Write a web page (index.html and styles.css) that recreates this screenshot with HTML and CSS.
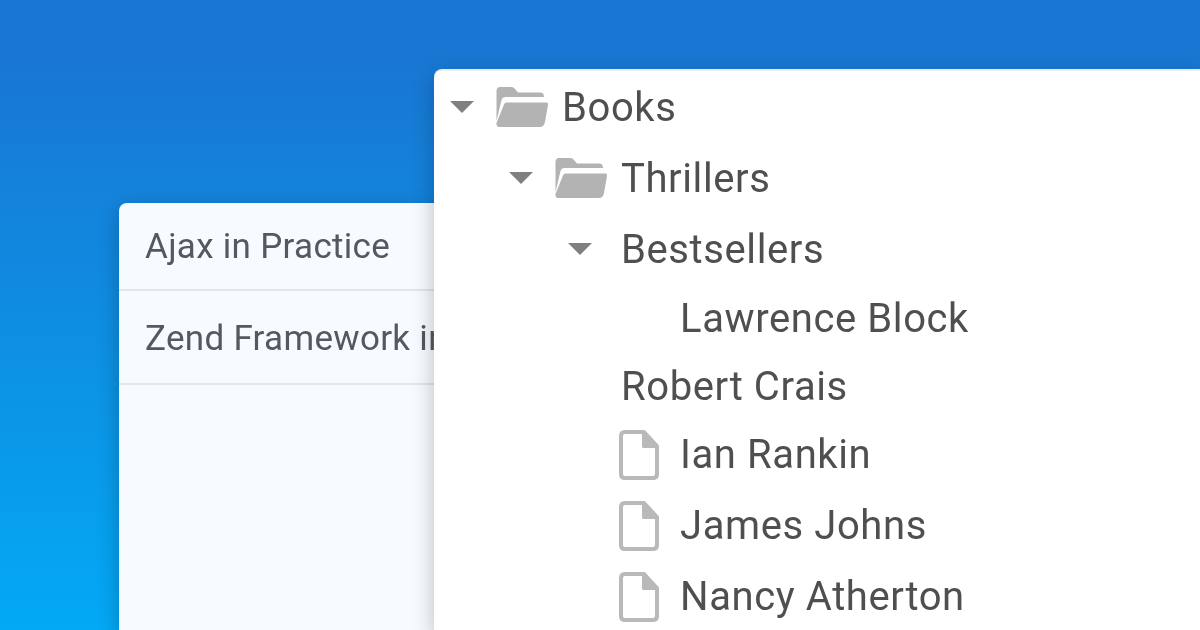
FILE: index.html
```html
<!DOCTYPE html>
<html lang="en">
<head>
<meta charset="UTF-8" />
<title>Tree view</title>
<link rel="stylesheet" href="styles.css">
</head>
<body>
<svg class="defs" width="0" height="0">
  <symbol id="folder" viewBox="0 0 52 40">
    <path fill="#b3b3b3" d="M4 0h11c2 0 3 .8 4 2l3 3.500h22c2.500 0 4 1.500 4 4V10H9.500c-2 0-3.400 1.200-4 3L.5 34V4C.5 1.500 2 0 4 0z"/>
    <path fill="#b3b3b3" d="M10.500 15.500H50c1.500 0 2.300 1 2 2.500L49 35c-.5 3-2.500 5-5 5H4c-2.500 0-4-1.500-3.500-4L8 17.500c.4-1.300 1.300-2 2.500-2z"/>
  </symbol>
  <symbol id="file" viewBox="0 0 40 50">
    <path fill="none" stroke="#b9b9b9" stroke-width="4" stroke-linejoin="round" d="M6 2h19l13 14v28c0 2.500-1.500 4-4 4H6c-2.500 0-4-1.500-4-4V6c0-2.500 1.500-4 4-4z"/>
    <path fill="#b9b9b9" d="M23 2h3l12 13v3H25c-1.500 0-2-.5-2-2z"/>
  </symbol>
</svg>

<div class="panel back">
  <div class="book">Ajax in Practice</div>
  <div class="book">Zend Framework in Action</div>
</div>

<div class="panel tree">
  <div class="row row-icon lv0"><span class="arrow"></span><svg class="folder"><use href="#folder"/></svg><span class="label">Books</span></div>
  <div class="row row-icon lv1"><span class="arrow"></span><svg class="folder"><use href="#folder"/></svg><span class="label">Thrillers</span></div>
  <div class="row row-icon lv2"><span class="arrow"></span><span class="label">Bestsellers</span></div>
  <div class="row lv3"><span>Lawrence Block</span></div>
  <div class="row row-last lv2"><span class="label">Robert Crais</span></div>
  <div class="row row-file lv3"><svg class="file"><use href="#file"/></svg><span>Ian Rankin</span></div>
  <div class="row row-file lv3"><svg class="file"><use href="#file"/></svg><span>James Johns</span></div>
  <div class="row row-file lv3"><svg class="file"><use href="#file"/></svg><span>Nancy Atherton</span></div>
</div>
</body>
</html>
```
FILE: styles.css
```css
html, body {
  margin: 0;
  height: 100%;
}
body {
  position: relative;
  overflow: hidden;
  font-family: "Roboto", "Liberation Sans", sans-serif;
  background: linear-gradient(to bottom, #1976d2 8%, #03a9f5 100%);
}
.defs { position: absolute; }

.panel {
  position: absolute;
  bottom: 0;
  right: 0;
  overflow: hidden;
  border-radius: 8px 0 0 0;
  box-shadow: 0 8px 22px rgba(0,0,0,0.25);
}

.back {
  left: 119px;
  top: 203px;
  background: #f6fbff;
}
.book {
  height: 86px;
  padding-left: 26px;
  line-height: 87px;
  font-size: 35px;
  letter-spacing: 0.3px;
  color: #54595f;
  white-space: nowrap;
  overflow: hidden;
  border-bottom: 2px solid #e2e6e9;
  filter: blur(0.4px);
}
.book + .book { height: 92px; line-height: 96px; }

.tree {
  left: 434px;
  top: 69px;
  background: #fff;
  font-size: 40px;
  letter-spacing: 0.6px;
  color: #4f4f4f;
  box-sizing: border-box;
  border-top: 2px solid #ececec;
}

.row {
  display: flex;
  align-items: center;
  height: 68px;
  white-space: nowrap;
  filter: blur(0.4px);
}
.row-icon, .row-file { height: 71px; }
.row-last { height: 67px; }
.label { padding-top: 2px; }
.lv0 { padding-left: 16px; }
.lv1 { padding-left: 75px; }
.lv2 { padding-left: 187px; }
.lv2.row-icon { padding-left: 134px; }
.lv3 { padding-left: 246px; }
.lv3.row-file { padding-left: 185px; }

.arrow {
  width: 0;
  height: 0;
  margin-right: 22px;
  border-left: 12px solid transparent;
  border-right: 12px solid transparent;
  border-top: 12px solid #808080;
}
.lv2 .arrow { margin-right: 29px; }
.folder {
  width: 52px;
  height: 40px;
  margin-right: 14px;
}
.file {
  width: 40px;
  height: 50px;
  margin-right: 21px;
}
```
